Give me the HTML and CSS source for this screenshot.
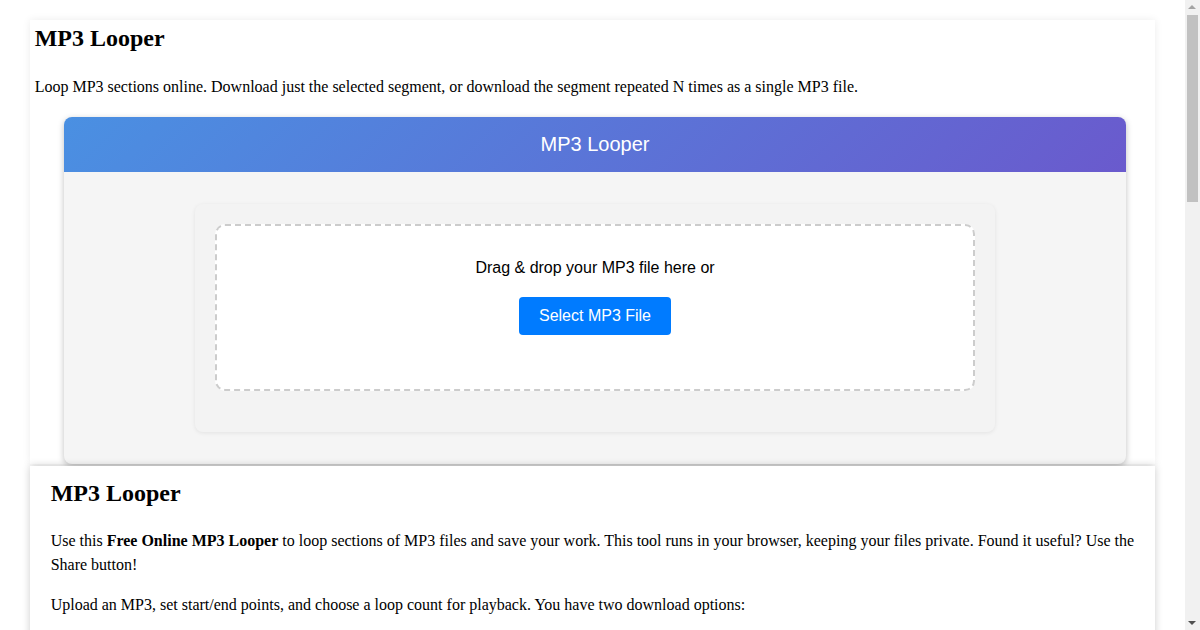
FILE: index.html
```html
<!DOCTYPE html>
<html lang="en">
<head>
    <meta charset="UTF-8">
    <meta name="viewport" content="width=device-width, initial-scale=1.0">
    <title>MP3 Looper - Loop MP3 Sections Online</title>
    <link rel="stylesheet" href="styles.css">
</head>
<body>

    <div class="page">
        <h2>MP3 Looper</h2>
        <p>Loop MP3 sections online. Download just the selected segment, or download the segment repeated N times as a single MP3 file.</p>

        <div class="looper">
            <div class="looper-head">MP3 Looper</div>
            <div class="looper-body">
                <div class="upload-panel">
                    <div class="dropzone" id="dropzone">
                        <p>Drag &amp; drop your MP3 file here or</p>
                        <button class="select-btn" id="selectBtn">Select MP3 File</button>
                        <input type="file" id="fileInput" accept="audio/mpeg" hidden>
                    </div>
                </div>
            </div>
        </div>
    </div>

    <section class="about">
        <h2>MP3 Looper</h2>
        <p>Use this <strong>Free Online MP3 Looper</strong> to loop sections of MP3 files and save your work. This tool runs in your browser, keeping your files private. Found it useful? Use the Share button!</p>
        <p>Upload an MP3, set start/end points, and choose a loop count for playback. You have two download options:</p>
        <ul>
            <li><strong>Download Segment</strong> saves only the part between the start and end points.</li>
            <li><strong>Download Looped</strong> saves the segment repeated N times as a single MP3 file.</li>
        </ul>

        <h3>How to use it</h3>
        <ol>
            <li>Drag and drop an MP3 file onto the upload area, or click "Select MP3 File".</li>
            <li>Play the track and mark the start and end of the part you want to loop.</li>
            <li>Set the number of loops and press play to hear the result.</li>
            <li>Download the segment on its own, or the looped version.</li>
        </ol>

        <h3>Why loop a section?</h3>
        <p>Looping is handy for practising a tricky passage on an instrument, learning the lyrics of a verse, transcribing a solo, or making a longer background track from a short clip.</p>
        <p>Musicians, dancers, language learners and video editors all use loops to repeat the same few seconds without reaching for the seek bar each time.</p>

        <h3>Privacy</h3>
        <p>Your audio never leaves your computer. Decoding, cutting and encoding are all done locally in the browser, so nothing is uploaded to a server.</p>

        <h3>Frequently asked questions</h3>
        <p><strong>Is it free?</strong><br>Yes, the tool is completely free and needs no sign up.</p>
        <p><strong>Which formats are supported?</strong><br>The looper is made for MP3 files. Most browsers can also open WAV and OGG files.</p>
        <p><strong>Is there a file size limit?</strong><br>There is no fixed limit, but very large files may take longer to process on slower devices.</p>
        <p><strong>Will the quality drop?</strong><br>The output is re-encoded as MP3 at a high bitrate, so the difference is hard to hear.</p>
        <p><strong>Does it work on mobile?</strong><br>Yes, it works in recent versions of Chrome, Firefox, Safari and Edge on phones and tablets.</p>
    </section>

    <!-- page scrollbar -->
    <div class="scrollbar">
        <span class="arrow up"></span>
        <div class="thumb"></div>
        <span class="arrow down"></span>
    </div>

    <script>
        var fileInput = document.getElementById("fileInput");
        document.getElementById("selectBtn").addEventListener("click", function() {
            fileInput.click();
        });

        var dropzone = document.getElementById("dropzone");
        dropzone.addEventListener("dragover", function(event) {
            event.preventDefault();
            dropzone.classList.add("over");
        });
        dropzone.addEventListener("dragleave", function() {
            dropzone.classList.remove("over");
        });
        dropzone.addEventListener("drop", function(event) {
            event.preventDefault();
            dropzone.classList.remove("over");
        });
    </script>
</body>
</html>
```

FILE: styles.css
```css
body {
    font-family: "Liberation Serif", "Times New Roman", serif;
    font-size: 16px;
    line-height: 1.5;
    margin: 0;
    padding: 0 15px 0 0;
    color: #000;
    background-color: #fff;
}
.page {
    width: 95%;
    margin: 20px auto 0;
    padding: 0 5px;
    box-sizing: border-box;
    background-color: #fff;
    box-shadow: 0 0 8px rgba(0, 0, 0, 0.08);
}
h2 {
    font-size: 24px;
    margin: 0 0 20px;
}
p {
    margin: 0 0 16px;
}
.page > h2 {
    margin-bottom: 19px;
}
.page > p {
    margin-bottom: 18px;
}
.looper {
    margin: 0 24px 0 29px;
    border-radius: 8px;
    overflow: hidden;
    background-color: #f5f5f5;
    box-shadow: 0 2px 6px rgba(0, 0, 0, 0.25);
    font-family: "Liberation Sans", Arial, sans-serif;
}
.looper-head {
    height: 55px;
    line-height: 55px;
    text-align: center;
    font-size: 20px;
    color: #fff;
    background: linear-gradient(135deg, #4a90e2, #6a5acd);
}
.looper-body {
    padding: 32px 20px;
}
.upload-panel {
    max-width: 800px;
    margin: 0 auto;
    padding: 20px 20px 41px;
    box-sizing: border-box;
    background-color: #f3f3f3;
    border-radius: 8px;
    box-shadow: 0 1px 4px rgba(0, 0, 0, 0.08);
}
.dropzone {
    border: 2px dashed #ccc;
    border-radius: 10px;
    background-color: #fff;
    text-align: center;
    padding: 33px 20px 54px;
    line-height: normal;
}
.dropzone p {
    margin: 0 0 20px;
}
.dropzone.over {
    border-color: #007bff;
}
.select-btn {
    font-family: "Liberation Sans", Arial, sans-serif;
    font-size: 16px;
    color: #fff;
    background-color: #007bff;
    border: none;
    border-radius: 4px;
    padding: 10px 20px;
    cursor: pointer;
}
.select-btn:hover {
    background-color: #0056b3;
}
.about {
    width: 95%;
    margin: 2px auto 20px;
    padding: 9px 21px 20px;
    box-sizing: border-box;
    background-color: #fff;
    box-shadow: 0 0 8px rgba(0, 0, 0, 0.2);
}
.about > h2 {
    margin-bottom: 18px;
}
.about h3 {
    font-size: 19px;
    margin: 24px 0 12px;
}
.about ul,
.about ol {
    margin: 0 0 16px;
    padding-left: 28px;
}
.about li {
    margin-bottom: 6px;
}
.scrollbar {
    position: fixed;
    top: 0;
    right: 0;
    width: 15px;
    height: 100%;
    background-color: #f1f1f1;
}
.thumb {
    position: absolute;
    top: 15px;
    left: 2px;
    width: 11px;
    height: 187px;
    background-color: #c1c1c1;
}
.arrow {
    position: absolute;
    left: 3px;
    width: 0;
    height: 0;
    border-left: 4px solid transparent;
    border-right: 4px solid transparent;
}
.arrow.up {
    top: 5px;
    border-bottom: 4px solid #a3a3a3;
}
.arrow.down {
    bottom: 5px;
    border-top: 4px solid #505050;
}
```
